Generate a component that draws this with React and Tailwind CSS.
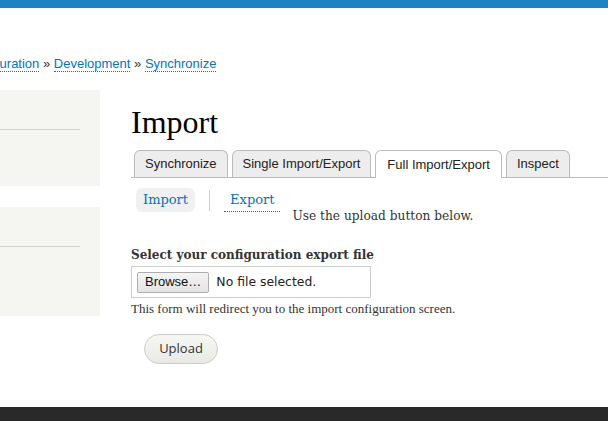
export default function App() {
  const serif = { fontFamily: '"DejaVu Serif", Georgia, serif' };
  const tabs = ["Synchronize", "Single Import/Export", "Full Import/Export", "Inspect"];

  return (
    <div className="flex h-[421px] w-[608px] flex-col overflow-hidden bg-white">
      <div className="h-[8px] shrink-0 bg-[#1e83c2]" />

      {/* breadcrumb */}
      <div
        className="mt-[48px] ml-[-38px] whitespace-nowrap text-[13px] leading-[16px] text-[#333]"
        style={{ fontFamily: '"Liberation Sans", Arial, sans-serif' }}
      >
        <a className="border-b border-dotted border-[#0074bd] text-[#0074bd]">Configuration</a>
        <span> » </span>
        <a className="border-b border-dotted border-[#0074bd] text-[#0074bd]">Development</a>
        <span> » </span>
        <a className="border-b border-dotted border-[#0074bd] text-[#0074bd]">Synchronize</a>
      </div>

      <div className="mt-[18px] flex flex-1">
        {/* sidebar */}
        <div className="w-[100px] shrink-0">
          <div className="h-[96px] bg-[#f5f5f2] pt-[39px]">
            <div className="h-px w-[80px] bg-[#d4d4d0]" />
          </div>
          <div className="mt-[21px] h-[109px] bg-[#f5f5f2] pt-[39px]">
            <div className="h-px w-[80px] bg-[#d4d4d0]" />
          </div>
        </div>

        {/* main */}
        <div className="ml-[31px] flex-1">
          <h1
            className="mt-[16px] text-[32px] leading-[32px] text-black"
            style={{ fontFamily: '"Liberation Serif", "Times New Roman", serif' }}
          >
            Import
          </h1>

          <div
            className="mt-[12px] flex gap-[4px] border-b border-[#bbb] pl-[3px]"
            style={{ fontFamily: '"Liberation Sans", Arial, sans-serif' }}
          >
            {tabs.map((t) => (
              <div
                key={t}
                className={
                  t === "Full Import/Export"
                    ? "-mb-px flex h-[28px] items-center rounded-t-[6px] border border-b-0 border-[#bbb] bg-white px-[11px] text-[13px] text-[#222]"
                    : "flex h-[27px] items-center rounded-t-[6px] border border-b-0 border-[#bbb] bg-[#ededed] px-[10px] text-[13px] text-[#222]"
                }
              >
                {t}
              </div>
            ))}
          </div>

          <div className="mt-[10px] flex items-start pl-[5px]" style={serif}>
            <a className="flex h-[24px] items-center rounded-[6px] bg-[#f0f0f0] px-[7px] text-[13px] text-[#0074bd]">
              Import
            </a>
            <div className="mx-[14px] mt-[2px] h-[21px] w-px bg-[#ccc]" />
            <a className="flex h-[24px] items-center border-b border-dotted border-[#0074bd] px-[6px] text-[13px] text-[#0074bd]">
              Export
            </a>
            <p className="ml-[12px] mt-[20px] text-[12.2px] leading-[16px] text-[#333]">
              Use the upload button below.
            </p>
          </div>

          <div className="mt-[23px]" style={serif}>
            <label className="block text-[12px] font-bold leading-[16px] text-[#333]">
              Select your configuration export file
            </label>
            <div className="mt-[3px] flex h-[32px] w-[240px] items-center border border-[#ccc] px-[5px]">
              <div
                className="flex h-[21px] items-center rounded-[2px] border border-[#adadad] bg-gradient-to-b from-[#f4f4f4] to-[#e4e4e4] px-[7px] text-[13px] text-[#111]"
                style={{ fontFamily: '"Liberation Sans", Arial, sans-serif' }}
              >
                Browse…
              </div>
              <span
                className="ml-[7px] text-[12.4px] text-[#222]"
                style={{ fontFamily: '"DejaVu Sans", Verdana, sans-serif' }}
              >
                No file selected.
              </span>
            </div>
            <p
              className="mt-[3px] text-[13px] leading-[15px] text-[#333]"
              style={{ fontFamily: '"Liberation Serif", Georgia, serif' }}
            >
              This form will redirect you to the import configuration screen.
            </p>
            <button
              className="ml-[13px] mt-[18px] flex h-[30px] w-[74px] items-center justify-center rounded-full border border-[#ccc] bg-gradient-to-b from-[#f6f6f3] to-[#e8e8e4] text-[13px] text-[#333]"
              style={{ fontFamily: '"Open Sans", sans-serif' }}
            >
              Upload
            </button>
          </div>
        </div>
      </div>

      <div className="h-[14px] shrink-0 bg-[#292929]" />
    </div>
  );
}
